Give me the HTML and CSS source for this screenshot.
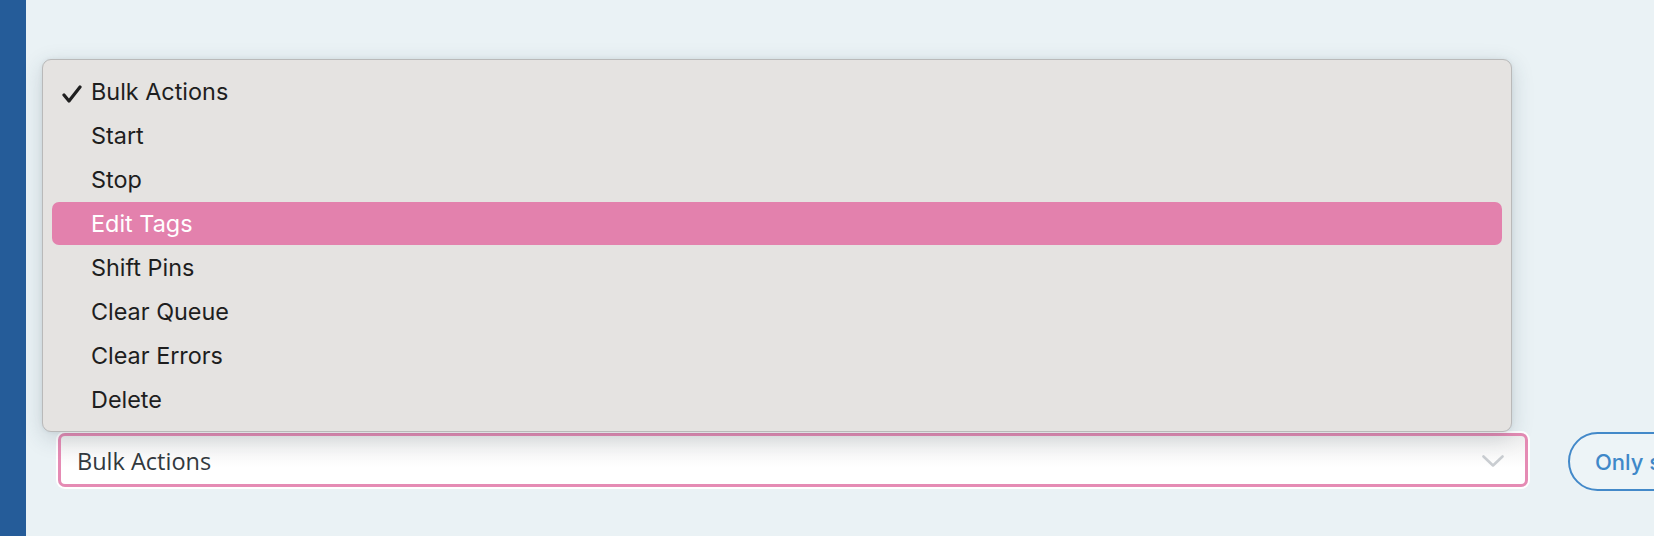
FILE: index.html
```html
<!DOCTYPE html>
<html>
<head>
<meta charset="utf-8">
<link rel="stylesheet" href="styles.css">
</head>
<body>
<div class="page">
  <aside class="sidebar"></aside>
  <main class="main">
    <div class="toolbar">
      <div class="select">
        <span class="select-value">Bulk Actions</span>
        <svg class="chevron" width="22" height="12" viewBox="0 0 22 12"><path d="M1.5 1.5 L11 10.5 L20.5 1.5" fill="none" stroke="#c9cdd1" stroke-width="2.6" stroke-linecap="round" stroke-linejoin="round"/></svg>
      </div>
      <button class="pill">Only show selected</button>
    </div>
  </main>
  <div class="menu">
    <div class="item checked">
      <svg class="check" width="20" height="18" viewBox="0 0 20 18"><path d="M2 10 L7 16 L18 2" fill="none" stroke="#1f1f1f" stroke-width="3.2" stroke-linecap="round" stroke-linejoin="round"/></svg>
      <span>Bulk Actions</span>
    </div>
    <div class="item"><span>Start</span></div>
    <div class="item"><span>Stop</span></div>
    <div class="item active"><span>Edit Tags</span></div>
    <div class="item"><span>Shift Pins</span></div>
    <div class="item"><span>Clear Queue</span></div>
    <div class="item"><span>Clear Errors</span></div>
    <div class="item"><span>Delete</span></div>
  </div>
</div>
</body>
</html>
```
FILE: styles.css
```css
html, body {
  margin: 0;
  padding: 0;
  height: 100%;
  overflow: hidden;
}
body {
  background: #eaf2f5;
  font-family: "Inter", "Liberation Sans", sans-serif;
}
.page {
  position: relative;
  display: flex;
  height: 536px;
  width: 1654px;
  overflow: hidden;
}
.sidebar {
  flex: 0 0 26px;
  background: #255c99;
}
.main {
  flex: 1;
  min-width: 0;
  padding: 433px 0 0 32px;
  overflow: hidden;
}
.toolbar {
  display: flex;
  align-items: flex-start;
  gap: 40px;
  width: 1900px;
}
.select {
  flex: 0 0 auto;
  box-sizing: border-box;
  width: 1470px;
  height: 54px;
  border: 3px solid #e58bb4;
  border-radius: 7px;
  background: linear-gradient(#efefef, #ffffff 65%);
  box-shadow: 0 0 0 2px #ffffff;
  display: flex;
  align-items: center;
  justify-content: space-between;
  padding: 0 21px 0 16px;
}
.select-value {
  font-family: "Open Sans", "Liberation Sans", sans-serif;
  font-size: 23.5px;
  color: #32393e;
  margin-top: 1px;
}
.chevron {
  display: block;
  margin-top: 2px;
}
.pill {
  flex: 0 0 auto;
  box-sizing: border-box;
  height: 59px;
  width: 320px;
  margin-top: -1px;
  border: 2px solid #4389c9;
  border-radius: 30px;
  background: #edf4f7;
  color: #3f88c9;
  font-family: "Inter", "Liberation Sans", sans-serif;
  font-weight: 500;
  font-size: 22px;
  text-align: left;
  padding: 0 0 0 25px;
  white-space: nowrap;
}
.menu {
  position: absolute;
  left: 42px;
  top: 59px;
  width: 1470px;
  height: 373px;
  box-sizing: border-box;
  background: #e5e3e1;
  border: 1px solid #b9b9b9;
  border-radius: 9px;
  box-shadow: 0 6px 22px rgba(40, 60, 80, 0.18), 0 0 4px rgba(40, 60, 80, 0.08);
  padding: 10px 9px;
}
.item {
  position: relative;
  height: 44px;
  line-height: 44px;
  padding-left: 39px;
  font-size: 23.4px;
  color: #1e1e1e;
  border-radius: 7px;
  white-space: nowrap;
}
.item.active {
  background: #e381ad;
  color: #ffffff;
  height: 43px;
  margin-bottom: 1px;
}
.check {
  position: absolute;
  left: 10px;
  top: 15px;
}
```
